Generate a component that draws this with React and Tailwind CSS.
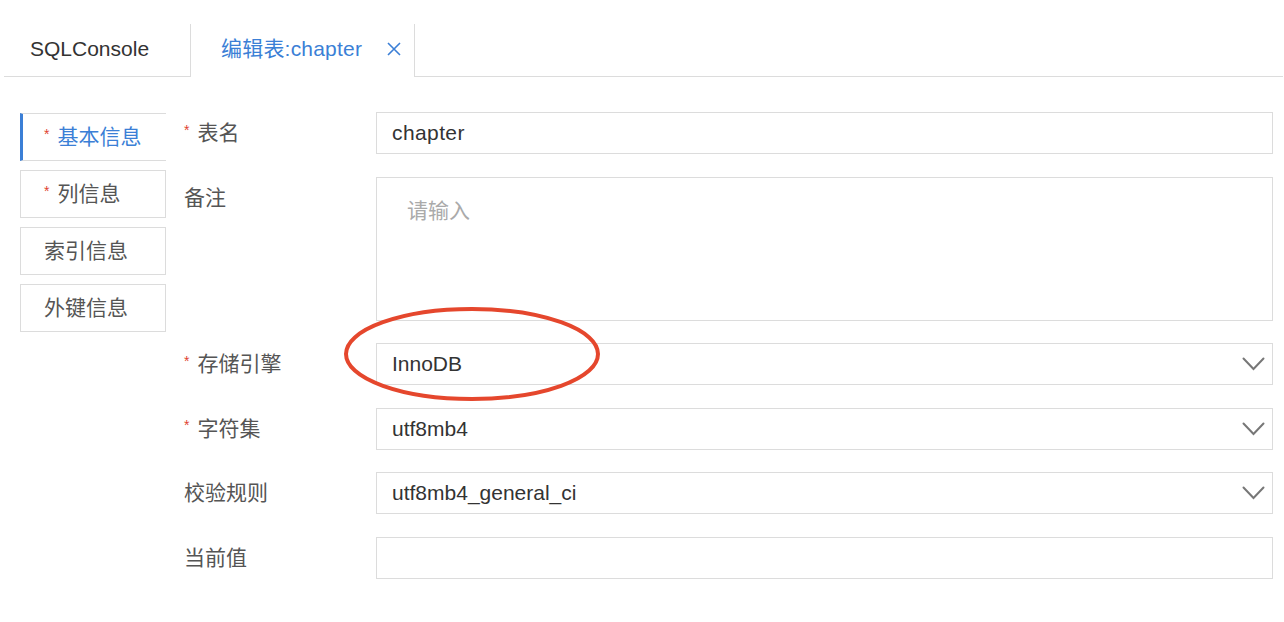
const FONT = { fontFamily: '"Liberation Sans", "Noto Sans CJK SC", sans-serif' }

const menu = [
  { label: '基本信息', required: true, active: true },
  { label: '列信息', required: true },
  { label: '索引信息' },
  { label: '外键信息' },
]

function Star() {
  return <span className="text-[#e0432f] text-[14px] mr-[8px] relative -top-[3px]">*</span>
}

function Label({ text, required }) {
  return (
    <div className="w-[192px] shrink-0 flex items-center h-[42px] text-[21px] text-[#555]">
      {required && <Star />}
      <span>{text}</span>
    </div>
  )
}

function Chevron() {
  return (
    <svg className="w-[23px] h-[14px]" viewBox="0 0 23 14" fill="none" stroke="#777" strokeWidth="2" strokeLinecap="round">
      <path d="M1.5 1.5L11.5 12L21.5 1.5" />
    </svg>
  )
}

function Select({ value }) {
  return (
    <div className="flex-1 h-[42px] border border-[#dcdcdc] flex items-center justify-between pl-[15px] pr-[7px] text-[21px] text-[#333]">
      <span>{value}</span>
      <Chevron />
    </div>
  )
}

export default function App() {
  return (
    <div className="relative w-[1284px] h-[622px] bg-white overflow-hidden" style={FONT}>
      {/* tab bar */}
      <div className="flex mt-[24px] ml-[4px] mr-[1px] h-[53px]">
        <div className="w-[187px] h-full flex items-center pl-[26px] pb-[3px] border-b border-r border-[#dcdcdc] text-[21px] text-[#333]">
          SQLConsole
        </div>
        <div className="w-[224px] h-full flex items-center pl-[30px] pb-[3px] border-r border-[#dcdcdc] text-[21px] text-[#3b7fd6]">
          <span className="tracking-[0.2px]">编辑表:chapter</span>
          <svg className="ml-[25px] w-[14px] h-[14px]" viewBox="0 0 14 14" fill="none" stroke="#3b7fd6" strokeWidth="1.6">
            <path d="M1 1L13 13M13 1L1 13" />
          </svg>
        </div>
        <div className="flex-1 h-full border-b border-[#dcdcdc]" />
      </div>

      {/* body */}
      <div className="flex pl-[20px] pr-[11px]">
        <div className="w-[146px] shrink-0 mt-[36px] flex flex-col gap-[9px]">
          {menu.map((m) =>
            m.active ? (
              <div
                key={m.label}
                className="h-[48px] flex items-center pl-[21px] border-l-[3px] border-l-[#3b7fd6] border-y border-[#dcdcdc] text-[21px] text-[#3b7fd6]"
              >
                <Star />
                {m.label}
              </div>
            ) : (
              <div
                key={m.label}
                className="h-[48px] flex items-center pl-[23px] border border-[#dcdcdc] text-[21px] text-[#555]"
              >
                {m.required && <Star />}
                {m.label}
              </div>
            )
          )}
        </div>

        <div className="flex-1 ml-[18px] mt-[35px] flex flex-col gap-[22.5px]">
          <div className="flex">
            <Label text="表名" required />
            <div className="flex-1 h-[42px] border border-[#dcdcdc] flex items-center pl-[15px] text-[21px] text-[#333] tracking-[0.4px]">chapter</div>
          </div>
          <div className="flex">
            <Label text="备注" />
            <div className="flex-1 h-[144px] border border-[#dcdcdc] pl-[30px] pt-[17px] text-[21px] text-[#aaa]">请输入</div>
          </div>
          <div className="flex">
            <Label text="存储引擎" required />
            <Select value="InnoDB" />
          </div>
          <div className="flex">
            <Label text="字符集" required />
            <Select value="utf8mb4" />
          </div>
          <div className="flex">
            <Label text="校验规则" />
            <Select value="utf8mb4_general_ci" />
          </div>
          <div className="flex">
            <Label text="当前值" />
            <div className="flex-1 h-[42px] border border-[#dcdcdc]" />
          </div>
        </div>
      </div>

      {/* red annotation ellipse */}
      <svg className="absolute left-[343px] top-[306px] w-[258px] h-[96px] pointer-events-none" viewBox="0 0 258 96" fill="none">
        <ellipse cx="129" cy="48" rx="126" ry="45" stroke="#e5472d" strokeWidth="4" />
      </svg>
    </div>
  )
}
